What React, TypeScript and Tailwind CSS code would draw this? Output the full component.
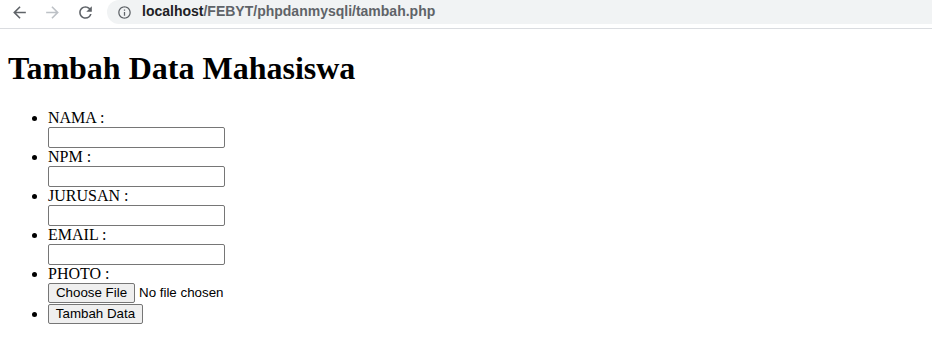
import React from "react";

const fields = ["NAMA", "NPM", "JURUSAN", "EMAIL"];

const BackIcon = ({ color }: { color: string }) => (
  <svg width="19" height="19" viewBox="0 0 24 24" fill={color}>
    <path d="M20 11H7.83l5.59-5.59L12 4l-8 8 8 8 1.41-1.41L7.83 13H20v-2z" />
  </svg>
);

const ForwardIcon = ({ color }: { color: string }) => (
  <svg width="19" height="19" viewBox="0 0 24 24" fill={color}>
    <path d="M12 4l-1.41 1.41L16.17 11H4v2h12.17l-5.58 5.59L12 20l8-8z" />
  </svg>
);

const ReloadIcon = () => (
  <svg width="19" height="19" viewBox="0 0 24 24" fill="#5f6368">
    <path d="M17.65 6.35A7.958 7.958 0 0 0 12 4c-4.42 0-7.99 3.58-7.99 8s3.57 8 7.99 8c3.73 0 6.84-2.55 7.73-6h-2.08A5.99 5.99 0 0 1 12 18c-3.31 0-6-2.69-6-6s2.69-6 6-6c1.66 0 3.14.69 4.22 1.78L13 11h7V4l-2.35 2.35z" />
  </svg>
);

const InfoIcon = () => (
  <svg width="15" height="15" viewBox="0 0 24 24" fill="#5f6368">
    <path d="M11 7h2v2h-2zm0 4h2v6h-2zm1-9C6.48 2 2 6.48 2 12s4.48 10 10 10 10-4.48 10-10S17.52 2 12 2zm0 18c-4.41 0-8-3.59-8-8s3.59-8 8-8 8 3.59 8 8-3.59 8-8 8z" />
  </svg>
);

const Bullet = () => (
  <div className="w-[40px] h-[18px] shrink-0 flex items-center pl-[24px]">
    <span className="w-[5px] h-[5px] rounded-full bg-black" />
  </div>
);

const App: React.FC = () => {
  return (
    <div className="w-[932px] h-[347px] bg-white overflow-hidden">
      {/* Browser toolbar */}
      <div className="h-[29px] border-b border-[#dadce0]">
        <div className="flex items-center h-[24px] pl-[10px]">
          <BackIcon color="#5f6368" />
          <div className="ml-[14px]">
            <ForwardIcon color="#bdc1c6" />
          </div>
          <div className="ml-[14px]">
            <ReloadIcon />
          </div>
          <div className="ml-[12px] flex-1 h-[24px] bg-[#f1f3f4] rounded-l-[12px] flex items-center pl-[10px]">
            <InfoIcon />
            <span className="ml-[10px] h-[24px] leading-[22px] text-[14px] font-bold font-['Liberation_Sans',Arial,sans-serif]">
              <span className="text-[#202124]">localhost</span>
              <span className="text-[#5f6368]">/FEBYT/phpdanmysqli/tambah.php</span>
            </span>
          </div>
        </div>
      </div>

      {/* Page */}
      <div className="px-2 font-['Liberation_Serif','Times_New_Roman',serif] text-black">
        <h1 className="mt-[21px] text-[32px] leading-[37px] font-bold">Tambah Data Mahasiswa</h1>
        <ul className="mt-[22px] text-[16px]">
          {fields.map((f) => (
            <li key={f} className="flex">
              <Bullet />
              <div className="flex flex-col">
                <div className="h-[18px] leading-[18px]">{f} :</div>
                <div className="w-[177px] h-[21px] border border-[#767676] rounded-[2px] bg-white" />
              </div>
            </li>
          ))}
          <li className="flex">
            <Bullet />
            <div className="flex flex-col">
              <div className="h-[18px] leading-[18px]">PHOTO :</div>
              <div className="flex items-center h-[20px] font-['Liberation_Sans',Arial,sans-serif] text-[13.33px]">
                <span className="w-[87px] h-[20px] border border-[#767676] rounded-[2px] bg-[#efefef] flex items-center justify-center">
                  Choose File
                </span>
                <span className="ml-[4px]">No file chosen</span>
              </div>
            </div>
          </li>
          <li className="flex items-center mt-[1px]">
            <div className="w-[40px] h-[20px] shrink-0 flex items-center pl-[24px]">
              <span className="w-[5px] h-[5px] rounded-full bg-black" />
            </div>
            <span className="flex items-center justify-center w-[95px] h-[20px] border border-[#767676] rounded-[2px] bg-[#efefef] font-['Liberation_Sans',Arial,sans-serif] text-[13.33px]">
              Tambah Data
            </span>
          </li>
        </ul>
      </div>
    </div>
  );
};

export default App;
